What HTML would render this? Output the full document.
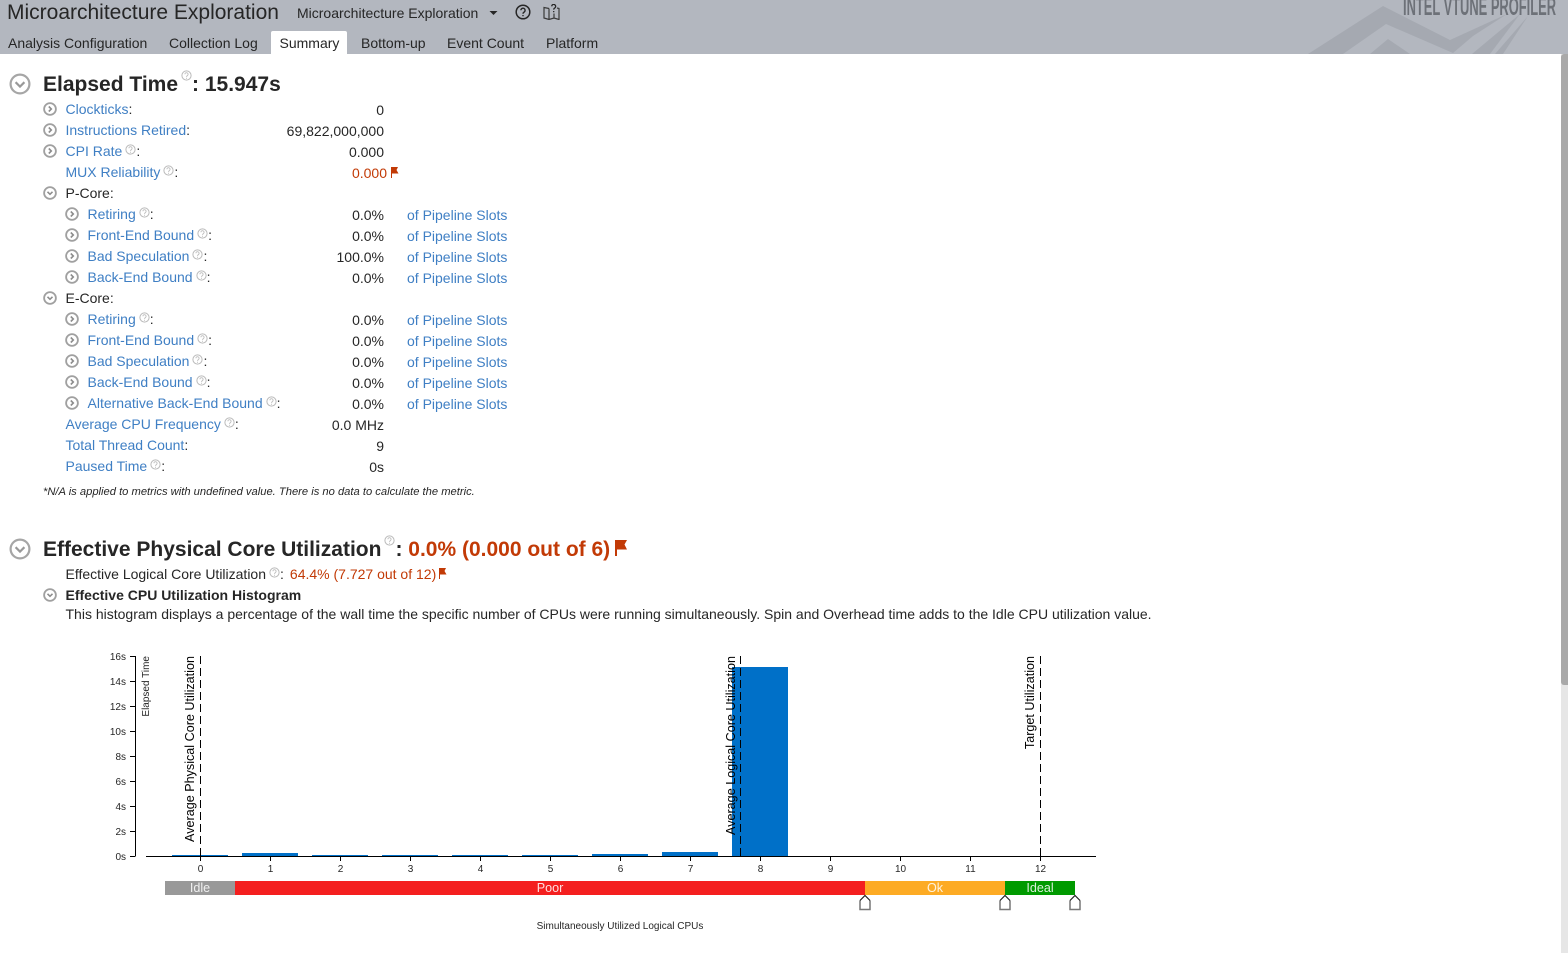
<!DOCTYPE html>
<html lang="en">
<head>
<meta charset="utf-8">
<title>Microarchitecture Exploration</title>
<style>
html,body{margin:0;padding:0;width:1568px;height:953px;overflow:hidden;background:#fff;}
body{position:relative;font-family:"Liberation Sans",sans-serif;font-size:14px;color:#262626;}
.t{position:absolute;white-space:nowrap;line-height:16px;}
a{color:#3f7fc4;text-decoration:none;}
.v{position:absolute;left:184px;width:200px;text-align:right;line-height:16px;white-space:nowrap;}
.p{position:absolute;left:407px;line-height:16px;color:#3f7fc4;white-space:nowrap;}
.r{color:#c23a06;}
svg{display:block;}
svg.q{display:inline-block;width:11px;height:11px;margin:-6px 0 0 3px;vertical-align:1px;}
.i{position:absolute;width:14px;height:14px;}
.I{position:absolute;width:22px;height:22px;}
.tab{position:absolute;top:35px;line-height:16px;white-space:nowrap;color:#262626;}
h2{position:absolute;margin:0;font-size:21px;line-height:26px;font-weight:bold;white-space:nowrap;color:#262626;}
</style>
</head>
<body>
<svg width="0" height="0" style="position:absolute">
<defs>
<symbol id="q" viewBox="0 0 11 11"><circle cx="5.5" cy="5.5" r="4.6" fill="none" stroke="#bababa" stroke-width="1"/><path d="M3.900 4.300a1.600 1.600 0 1 1 2.500 1.300c-.6.400-.9.600-.9 1.300M5.500 7.800v.9" fill="none" stroke="#bababa" stroke-width=".9"/></symbol>
<symbol id="d" viewBox="0 0 14 14"><circle cx="7" cy="7" r="5.900" fill="none" stroke="#a0a0a0" stroke-width="1.800"/><path d="M4.500 5.800 7 8.300 9.500 5.800" fill="none" stroke="#8c8c8c" stroke-width="1.600"/></symbol>
<symbol id="c" viewBox="0 0 14 14"><circle cx="7" cy="7" r="5.900" fill="none" stroke="#a0a0a0" stroke-width="1.800"/><path d="M5.800 4.500 8.300 7 5.800 9.500" fill="none" stroke="#8c8c8c" stroke-width="1.600"/></symbol>
<symbol id="D" viewBox="0 0 22 22"><circle cx="11" cy="11" r="9.400" fill="none" stroke="#a6a6a6" stroke-width="2.200"/><path d="M6.600 9.200 11 13.600l4.400-4.400" fill="none" stroke="#999" stroke-width="2.200"/></symbol>
</defs>
</svg>

<!-- header -->
<svg style="position:absolute;left:0;top:0" width="1568" height="54" viewBox="0 0 1568 54">
<rect width="1568" height="54" fill="#b3b7bf"/>
<path d="M1308 54 1383 6 1450 40 1507 14 1473 36 1453 53 1386 24 1343 54Z" fill="#a5a9b1"/>
<path d="M1370 54 1388 39 1410 54Z" fill="#a5a9b1"/>
<path d="M1472 54 1520 14 1490 54Z" fill="#a5a9b1"/>
<path d="M1495 54 1528 16 1503 54Z" fill="#a5a9b1"/>
<text x="1403" y="15" font-family="Liberation Sans,sans-serif" font-weight="bold" font-size="25" fill="#6d7178" textLength="153" lengthAdjust="spacingAndGlyphs">INTEL VTUNE PROFILER</text>
</svg>

<div class="t" style="left:7px;top:1px;font-size:21px;line-height:24px">Microarchitecture Exploration</div>
<div class="t" style="left:297px;top:5px">Microarchitecture Exploration</div>
<svg style="position:absolute;left:489px;top:10px" width="9" height="6"><path d="M.5 1h8L4.500 5Z" fill="#262626"/></svg>
<svg style="position:absolute;left:515px;top:4px" width="16" height="16" viewBox="0 0 16 16"><circle cx="8" cy="8" r="6.800" fill="none" stroke="#262626" stroke-width="1.500"/><path d="M5.900 6.300a2.100 2.100 0 1 1 3.300 1.700c-.8.500-1.200.9-1.200 1.800M8 11v1.300" fill="none" stroke="#262626" stroke-width="1.400"/></svg>
<svg style="position:absolute;left:543px;top:4px" width="17" height="16" viewBox="0 0 17 16"><path d="M6 4.500 1 3.500V14l5 1.500L11 14l5 1.500V4.500L14 4M6 4.500V15.500M11 9.500V14" fill="none" stroke="#3a3a3a" stroke-width="1.200"/><path d="M8.700 2.300a2 2 0 1 1 3 1.800c-.7.400-1 .7-1 1.500M10.700 7v1.300" fill="none" stroke="#262626" stroke-width="1.300"/></svg>

<div style="position:absolute;left:271px;top:31px;width:76px;height:23px;background:#fff;border-radius:2px 2px 0 0"></div>
<div class="tab" style="left:8px">Analysis Configuration</div>
<div class="tab" style="left:169px">Collection Log</div>
<div class="tab" style="left:279.500px">Summary</div>
<div class="tab" style="left:361px">Bottom-up</div>
<div class="tab" style="left:447px">Event Count</div>
<div class="tab" style="left:546px">Platform</div>

<!-- scrollbar -->
<div style="position:absolute;left:1561px;top:54px;width:7px;height:899px;background:#e6e6e6"></div>
<div style="position:absolute;left:1561px;top:54px;width:7px;height:631px;background:#a9a9a9;border-radius:3px 0 0 3px"></div>

<!-- elapsed time -->
<svg class="I" style="left:9px;top:73px"><use href="#D"/></svg>
<h2 style="left:43px;top:72px">Elapsed Time<svg class="q" style="margin-left:3px;vertical-align:10px"><use href="#q"/></svg>: 15.947s</h2>

<svg class="i" style="left:43px;top:102px"><use href="#c"/></svg>
<div class="t" style="left:65.500px;top:101px"><a>Clockticks</a>:</div><div class="v" style="top:102px">0</div>

<svg class="i" style="left:43px;top:123px"><use href="#c"/></svg>
<div class="t" style="left:65.500px;top:122px"><a>Instructions Retired</a>:</div><div class="v" style="top:123px">69,822,000,000</div>

<svg class="i" style="left:43px;top:144px"><use href="#c"/></svg>
<div class="t" style="left:65.500px;top:143px"><a>CPI Rate</a><svg class="q"><use href="#q"/></svg>:</div><div class="v" style="top:144px">0.000</div>

<div class="t" style="left:65.500px;top:164px"><a>MUX Reliability</a><svg class="q"><use href="#q"/></svg>:</div><div class="v r" style="top:165px;width:203px">0.000</div>
<svg style="position:absolute;left:390px;top:167px" width="9" height="11" viewBox="0 0 9 11"><path d="M1 0h7L6.500 3 8.500 6.500H2V11H1Z" fill="#c23a06"/></svg>

<svg class="i" style="left:43px;top:186px"><use href="#d"/></svg>
<div class="t" style="left:65.500px;top:185px">P-Core:</div>

<svg class="i" style="left:65px;top:207px"><use href="#c"/></svg>
<div class="t" style="left:87.500px;top:206px"><a>Retiring</a><svg class="q"><use href="#q"/></svg>:</div><div class="v" style="top:207px">0.0%</div><div class="p" style="top:207px">of Pipeline Slots</div>

<svg class="i" style="left:65px;top:228px"><use href="#c"/></svg>
<div class="t" style="left:87.500px;top:227px"><a>Front-End Bound</a><svg class="q"><use href="#q"/></svg>:</div><div class="v" style="top:228px">0.0%</div><div class="p" style="top:228px">of Pipeline Slots</div>

<svg class="i" style="left:65px;top:249px"><use href="#c"/></svg>
<div class="t" style="left:87.500px;top:248px"><a>Bad Speculation</a><svg class="q"><use href="#q"/></svg>:</div><div class="v" style="top:249px">100.0%</div><div class="p" style="top:249px">of Pipeline Slots</div>

<svg class="i" style="left:65px;top:270px"><use href="#c"/></svg>
<div class="t" style="left:87.500px;top:269px"><a>Back-End Bound</a><svg class="q"><use href="#q"/></svg>:</div><div class="v" style="top:270px">0.0%</div><div class="p" style="top:270px">of Pipeline Slots</div>

<svg class="i" style="left:43px;top:291px"><use href="#d"/></svg>
<div class="t" style="left:65.500px;top:290px">E-Core:</div>

<svg class="i" style="left:65px;top:312px"><use href="#c"/></svg>
<div class="t" style="left:87.500px;top:311px"><a>Retiring</a><svg class="q"><use href="#q"/></svg>:</div><div class="v" style="top:312px">0.0%</div><div class="p" style="top:312px">of Pipeline Slots</div>

<svg class="i" style="left:65px;top:333px"><use href="#c"/></svg>
<div class="t" style="left:87.500px;top:332px"><a>Front-End Bound</a><svg class="q"><use href="#q"/></svg>:</div><div class="v" style="top:333px">0.0%</div><div class="p" style="top:333px">of Pipeline Slots</div>

<svg class="i" style="left:65px;top:354px"><use href="#c"/></svg>
<div class="t" style="left:87.500px;top:353px"><a>Bad Speculation</a><svg class="q"><use href="#q"/></svg>:</div><div class="v" style="top:354px">0.0%</div><div class="p" style="top:354px">of Pipeline Slots</div>

<svg class="i" style="left:65px;top:375px"><use href="#c"/></svg>
<div class="t" style="left:87.500px;top:374px"><a>Back-End Bound</a><svg class="q"><use href="#q"/></svg>:</div><div class="v" style="top:375px">0.0%</div><div class="p" style="top:375px">of Pipeline Slots</div>

<svg class="i" style="left:65px;top:396px"><use href="#c"/></svg>
<div class="t" style="left:87.500px;top:395px"><a>Alternative Back-End Bound</a><svg class="q"><use href="#q"/></svg>:</div><div class="v" style="top:396px">0.0%</div><div class="p" style="top:396px">of Pipeline Slots</div>

<div class="t" style="left:65.500px;top:416px"><a>Average CPU Frequency</a><svg class="q"><use href="#q"/></svg>:</div><div class="v" style="top:417px">0.0 MHz</div>
<div class="t" style="left:65.500px;top:437px"><a>Total Thread Count</a>:</div><div class="v" style="top:438px">9</div>
<div class="t" style="left:65.500px;top:458px"><a>Paused Time</a><svg class="q"><use href="#q"/></svg>:</div><div class="v" style="top:459px">0s</div>

<div class="t" style="left:43px;top:484px;font-size:11.200px;font-style:italic">*N/A is applied to metrics with undefined value. There is no data to calculate the metric.</div>

<!-- effective physical -->
<svg class="I" style="left:9px;top:538px"><use href="#D"/></svg>
<h2 style="left:43px;top:537px">Effective Physical Core Utilization<svg class="q" style="margin-left:3px;vertical-align:10px"><use href="#q"/></svg>: <span class="r">0.0% (0.000 out of 6)</span></h2>
<svg style="position:absolute;left:614px;top:540px" width="14" height="16" viewBox="0 0 14 16"><path d="M1 0h12L10.500 4.500 13 9.500H3V16H1Z" fill="#c23a06"/></svg>

<div class="t" style="left:65.500px;top:566px">Effective Logical Core Utilization<svg class="q"><use href="#q"/></svg>:<span class="r" style="margin-left:6px">64.4% (7.727 out of 12)</span></div>
<svg style="position:absolute;left:438px;top:568px" width="9" height="11" viewBox="0 0 9 11"><path d="M1 0h7L6.500 3 8.500 6.500H2V11H1Z" fill="#c23a06"/></svg>

<svg class="i" style="left:43px;top:588px"><use href="#d"/></svg>
<div class="t" style="left:65.500px;top:587px;font-weight:bold">Effective CPU Utilization Histogram</div>
<div class="t" style="left:65.500px;top:606px">This histogram displays a percentage of the wall time the specific number of CPUs were running simultaneously. Spin and Overhead time adds to the Idle CPU utilization value.</div>

<!-- chart -->
<svg style="position:absolute;left:0;top:640px" width="1200" height="300" viewBox="0 640 1200 300" font-family="Liberation Sans,sans-serif">
<g fill="#0070c8">
<rect x="172" y="855" width="56" height="1"/>
<rect x="242" y="853" width="56" height="3"/>
<rect x="312" y="855" width="56" height="1"/>
<rect x="382" y="855" width="56" height="1"/>
<rect x="452" y="855" width="56" height="1"/>
<rect x="522" y="855" width="56" height="1"/>
<rect x="592" y="854" width="56" height="2"/>
<rect x="662" y="852" width="56" height="4"/>
<rect x="732" y="667" width="56" height="189"/>
</g>
<g stroke="#000" stroke-width="1" shape-rendering="crispEdges" fill="none">
<path d="M135.500 656V856.500M130 656.500h5M130 681.500h5M130 706.500h5M130 731.500h5M130 756.500h5M130 781.500h5M130 806.500h5M130 831.500h5M130 856.500h5"/>
<path d="M146 856.500H1096"/>
<path d="M200.500 856v5M270.500 856v5M340.500 856v5M410.500 856v5M480.500 856v5M550.500 856v5M620.500 856v5M690.500 856v5M760.500 856v5M830.500 856v5M900.500 856v5M970.500 856v5M1040.500 856v5"/>
<path d="M200.500 656V856M740.500 656V856M1040.500 656V856" stroke-dasharray="8 4"/>
</g>
<g font-size="10" fill="#262626" text-anchor="end">
<text x="126" y="660">16s</text><text x="126" y="685">14s</text><text x="126" y="710">12s</text><text x="126" y="735">10s</text><text x="126" y="760">8s</text><text x="126" y="785">6s</text><text x="126" y="810">4s</text><text x="126" y="835">2s</text><text x="126" y="860">0s</text>
</g>
<g font-size="10" fill="#262626" text-anchor="middle">
<text x="200.500" y="872">0</text><text x="270.500" y="872">1</text><text x="340.500" y="872">2</text><text x="410.500" y="872">3</text><text x="480.500" y="872">4</text><text x="550.500" y="872">5</text><text x="620.500" y="872">6</text><text x="690.500" y="872">7</text><text x="760.500" y="872">8</text><text x="830.500" y="872">9</text><text x="900.500" y="872">10</text><text x="970.500" y="872">11</text><text x="1040.500" y="872">12</text>
</g>
<text transform="translate(149 656) rotate(-90)" font-size="10" fill="#262626" text-anchor="end">Elapsed Time</text>
<text transform="translate(194 656) rotate(-90)" font-size="12.600" fill="#000" text-anchor="end">Average Physical Core Utilization</text>
<text transform="translate(735 656) rotate(-90)" font-size="12.600" fill="#000" text-anchor="end">Average Logical Core Utilization</text>
<text transform="translate(1034 656) rotate(-90)" font-size="12.600" fill="#000" text-anchor="end">Target Utilization</text>
<rect x="165" y="881" width="70" height="14" fill="#999"/>
<rect x="235" y="881" width="630" height="14" fill="#f41f1f"/>
<rect x="865" y="881" width="140" height="14" fill="#fdab24"/>
<rect x="1005" y="881" width="70" height="14" fill="#009a00"/>
<g font-size="12.600" fill="#fff" fill-opacity=".85" text-anchor="middle">
<text x="200" y="892">Idle</text><text x="550" y="892">Poor</text><text x="935" y="892">Ok</text><text x="1040" y="892">Ideal</text>
</g>
<g fill="none" stroke-width="1.200">
<path d="M860 900.500V909.500H870V900.500" stroke="#777" stroke-width="1.500"/>
<path d="M860 900.500 865 895.500 870 900.500" stroke="#222"/>
<path d="M1000 900.500V909.500H1010V900.500" stroke="#777" stroke-width="1.500"/>
<path d="M1000 900.500 1005 895.500 1010 900.500" stroke="#222"/>
<path d="M1070 900.500V909.500H1080V900.500" stroke="#777" stroke-width="1.500"/>
<path d="M1070 900.500 1075 895.500 1080 900.500" stroke="#222"/>
</g>
<text x="620" y="929" font-size="10" fill="#262626" text-anchor="middle">Simultaneously Utilized Logical CPUs</text>
</svg>
</body>
</html>
